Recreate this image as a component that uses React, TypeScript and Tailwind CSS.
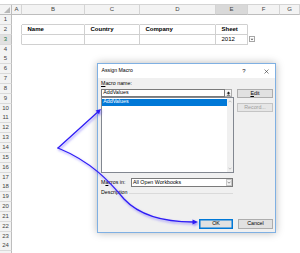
import React from "react";

const ROWS = Array.from({ length: 24 }, (_, i) => i + 1);

function Cell({
  cls,
  children,
}: {
  cls: string;
  children?: React.ReactNode;
}) {
  return <div className={"border-r border-b overflow-hidden flex items-center " + cls}>{children}</div>;
}

function SheetRow({ n }: { n: number }) {
  const sel = n === 3;
  const t = n === 2 || n === 3;
  const top = n === 1;
  const tb = t ? "border-[#d0d0d0]" : top ? "border-r-transparent border-b-[#d0d0d0]" : "border-transparent";
  return (
    <div className="grid grid-cols-[12px_10px_63px_55px_76px_32px_32px_1fr] h-[9.857px]">
      <div
        className={
          "border-r border-b border-r-[#bdbdbd] border-b-[#dadada] flex items-center justify-center text-[6px] " +
          (sel ? "bg-[#e1e1e1] text-[#217346]" : "bg-[#f3f3f3] text-[#444]")
        }
      >
        {n}
      </div>
      <Cell cls={t ? "border-r-[#d0d0d0] border-b-transparent" : "border-transparent"} />
      <Cell cls={tb + " pl-[5.5px] font-bold"}>{n === 2 ? "Name" : null}</Cell>
      <Cell cls={tb + " pl-[5.5px] font-bold"}>{n === 2 ? "Country" : null}</Cell>
      <Cell cls={tb + " pl-[5.5px] font-bold"}>{n === 2 ? "Company" : null}</Cell>
      <Cell cls={tb + " pl-[5.5px] " + (n === 2 ? "font-bold" : "")}>
        {n === 2 ? "Sheet" : n === 3 ? "2012" : null}
      </Cell>
      <Cell cls="border-transparent pl-[1px]">
        {n === 3 ? (
          <div className="w-[6px] h-[6px] bg-white border border-[#a6a6a6] flex items-center justify-center">
            <svg width="4" height="3" viewBox="0 0 4 3">
              <path d="M0.5 0.8 L2 2.3 L3.5 0.8 Z" fill="#555" />
            </svg>
          </div>
        ) : null}
      </Cell>
      <Cell cls="border-transparent" />
    </div>
  );
}

function FillerRow() {
  return (
    <div className="grid grid-cols-[12px_1fr] h-[9.857px]">
      <div className="bg-[#f3f3f3] border-r border-r-[#bdbdbd]" />
      <div />
    </div>
  );
}

function ColHeader() {
  const cols = ["A", "B", "C", "D", "E", "F", "G"];
  return (
    <div className="grid grid-cols-[12px_10px_63px_55px_76px_32px_32px_1fr] h-[10.5px]">
      <div className="bg-[#f3f3f3] border-r border-b border-r-[#bdbdbd] border-b-[#bdbdbd] relative">
        <svg className="absolute right-[1px] bottom-[1px]" width="6" height="6" viewBox="0 0 6 6">
          <path d="M6 0 L6 6 L0 6 Z" fill="#b8b8b8" />
        </svg>
      </div>
      {cols.map((c) => (
        <div
          key={c}
          className={
            "border-r border-b border-r-[#d4d4d4] border-b-[#bdbdbd] flex items-center justify-center text-[6px] text-[#444] " +
            (c === "E" ? "bg-[#d9d9d9]" : "bg-[#f3f3f3]")
          }
        >
          {c}
        </div>
      ))}
    </div>
  );
}

function Btn({
  cls,
  children,
}: {
  cls: string;
  children: React.ReactNode;
}) {
  return <div className={"flex items-center justify-center " + cls}>{children}</div>;
}

function Dialog() {
  return (
    <div className="absolute left-[97px] top-[63px] w-[179px] h-[170px] border border-[#7fb0e3] bg-[#f0f0f0] shadow-[0_0_8px_rgba(0,0,0,0.28)] flex flex-col text-[5.3px] text-black font-['Liberation_Sans',Arial,sans-serif]">
      <div className="h-[14px] bg-white flex items-center pl-[3.5px]">
        <span className="flex-1 text-[5.2px]">Assign Macro</span>
        <span className="w-[10px] mr-[8px] text-center text-[6px] text-[#222]">?</span>
        <span className="w-[18px] flex items-center justify-center">
          <svg width="5" height="5" viewBox="0 0 5 5">
            <path d="M0.5 0.5 L4.5 4.5 M4.5 0.5 L0.5 4.5" stroke="#333" strokeWidth="0.6" />
          </svg>
        </span>
      </div>
      <div className="flex-1 flex flex-col pl-[3px] pr-[2px] pb-[3px]">
        <div className="flex gap-[3px]">
          <div className="w-[133px] flex flex-col">
            <div className="mt-[2px] h-[8px] flex items-center">
              <span>
                <span className="underline">M</span>acro name:
              </span>
            </div>
            <div className="mt-[1px] h-[8px] flex mr-[2px]">
              <div className="flex-1 bg-white border border-[#7a7a7a] flex items-center pl-[1.3px]">AddValues</div>
              <div className="w-[7px] bg-[#f7f7f7] border border-l-0 border-[#adadad] flex items-center justify-center">
                <svg width="5" height="5" viewBox="0 0 5 5">
                  <path d="M2.5 0.4 L4.4 2.4 L3.2 2.4 L3.2 3.4 L1.8 3.4 L1.8 2.4 L0.6 2.4 Z" fill="#222" />
                  <path d="M0.8 4.4 H4.2" stroke="#222" strokeWidth="0.6" />
                </svg>
              </div>
            </div>
            <div className="h-[76px] bg-white border border-[#828790] flex">
              <div className="flex-1 pt-[1px]">
                <div className="h-[6.5px] bg-[#0078d7] text-white flex items-center pl-[1.3px]">AddValues</div>
              </div>
              <div className="w-[6px] bg-[#f0f0f0] flex flex-col justify-between items-center py-[2px]">
                <svg width="4" height="3" viewBox="0 0 4 3">
                  <path d="M0.5 2.3 L2 0.8 L3.5 2.3" stroke="#a3a3a3" strokeWidth="0.6" fill="none" />
                </svg>
                <svg width="4" height="3" viewBox="0 0 4 3">
                  <path d="M0.5 0.7 L2 2.2 L3.5 0.7" stroke="#a3a3a3" strokeWidth="0.6" fill="none" />
                </svg>
              </div>
            </div>
            <div className="mt-[5px] h-[9px] flex items-center">
              <span className="w-[29.7px]">
                M<span className="underline">a</span>cros in:
              </span>
              <div className="flex-1 h-full bg-white border border-[#7a7a7a] flex items-center pl-[1.3px] mr-[1px]">
                <span className="flex-1">All Open Workbooks</span>
                <div className="w-[6px] h-[7px] mr-[0.5px] border border-[#c6c6c6] bg-[#f3f3f3] flex items-center justify-center">
                  <svg width="4" height="3" viewBox="0 0 4 3">
                    <path d="M0.5 0.7 L2 2.2 L3.5 0.7" stroke="#555" strokeWidth="0.6" fill="none" />
                  </svg>
                </div>
              </div>
            </div>
            <div className="mt-[2px] h-[8px] flex items-center gap-[1.5px]">
              <span>Description</span>
              <div className="flex-1 h-px bg-[#dadada] mr-[1px]" />
            </div>
          </div>
          <div className="w-[36px] flex flex-col">
            <Btn cls="mt-[11px] h-[9px] bg-[#e1e1e1] border border-[#adadad]">
              <span>
                <span className="underline">E</span>dit
              </span>
            </Btn>
            <Btn cls="mt-[5px] h-[9px] bg-[#e6e6e6] border border-[#c4c4c4] text-[#9d9d9d]">Record...</Btn>
          </div>
        </div>
        <div className="mt-[22px] h-[10px] flex justify-end gap-[5px]">
          <Btn cls="w-[34px] bg-[#e1e1e1] border border-[#0078d7] shadow-[inset_0_0_0_0.5px_#0078d7]">OK</Btn>
          <Btn cls="w-[35px] bg-[#e1e1e1] border border-[#adadad]">Cancel</Btn>
        </div>
      </div>
    </div>
  );
}

function Arrows() {
  return (
    <svg className="absolute inset-0 pointer-events-none" width="300" height="253" viewBox="0 0 300 253">
      <defs>
        <filter id="glow" x="-30%" y="-30%" width="160%" height="160%">
          <feDropShadow dx="1" dy="1.6" stdDeviation="1.3" floodColor="#5a48ff" floodOpacity="0.6" />
        </filter>
      </defs>
      <g filter="url(#glow)">
        <g stroke="#2f1ef5" strokeWidth="1.3" fill="none" strokeLinecap="round" strokeLinejoin="round">
          <path d="M58 148 L97.5 112.2" />
          <path d="M58 148 C 92 162 110 182 124 199 C 140 216 165 222 193 222" />
        </g>
        <g fill="#2f1ef5">
          <polygon points="101,109 98.98,114.25 95.62,110.55" />
          <polygon points="198,222 192.5,219.4 192.5,224.6" />
        </g>
      </g>
    </svg>
  );
}

export default function App() {
  return (
    <div className="relative w-[300px] h-[253px] overflow-hidden bg-white text-[6px] text-black font-['Liberation_Sans',Arial,sans-serif]">
      <div className="h-[4.5px] bg-white border-b border-[#d4d4d4]" />
      <ColHeader />
      {ROWS.map((n) => (
        <SheetRow key={n} n={n} />
      ))}
      <FillerRow />
      <Dialog />
      <Arrows />
    </div>
  );
}
